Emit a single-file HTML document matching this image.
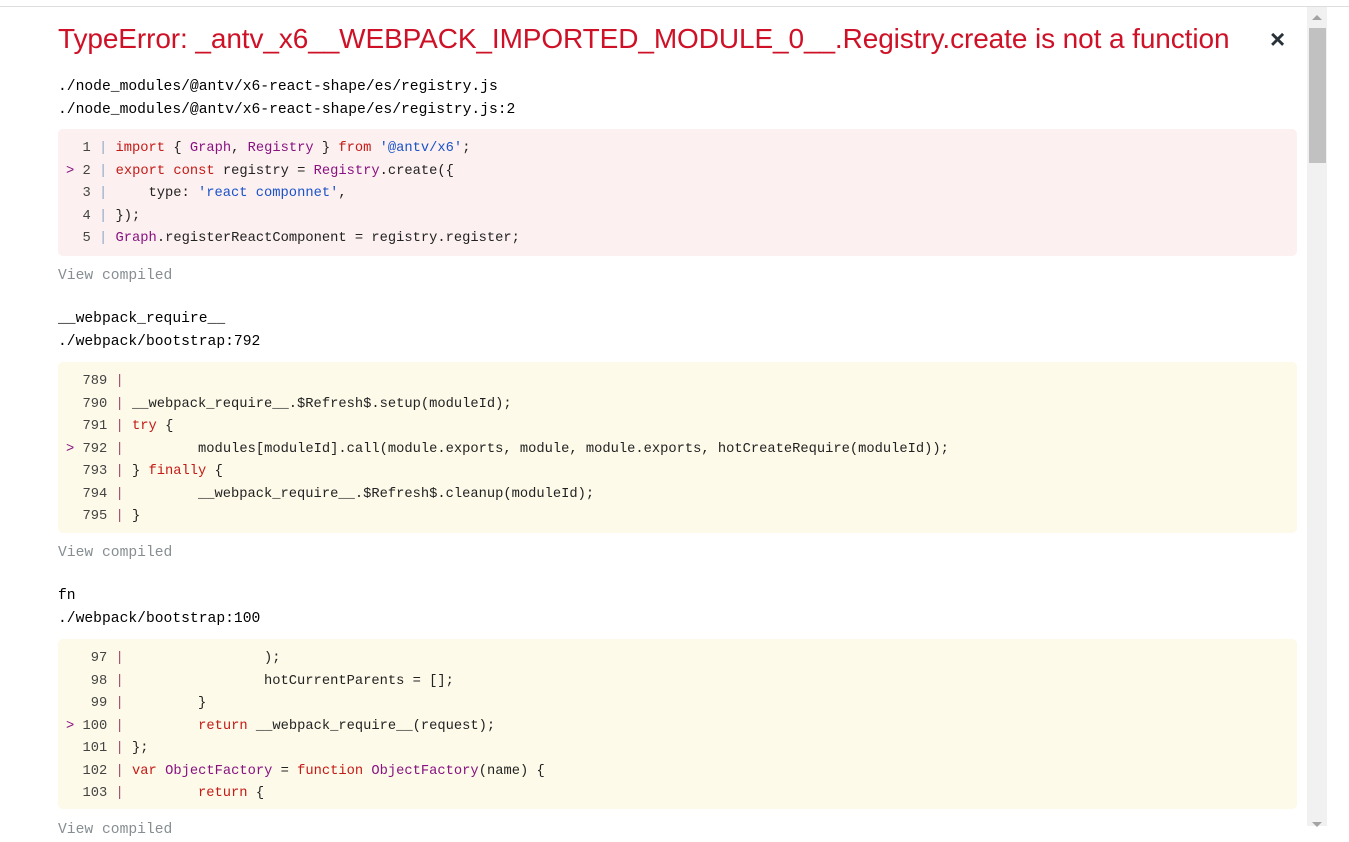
<!DOCTYPE html>
<html><head><meta charset="utf-8"><style>
html,body{margin:0;padding:0;background:#fff;width:1349px;height:826px;overflow:hidden;}
.top{position:absolute;left:0;top:6px;width:1349px;height:1px;background:#ddd;}
.sb{position:absolute;left:1307px;top:7px;width:20px;height:819px;background:#f1f1f1;}
.thumb{position:absolute;left:1309px;top:28px;width:17px;height:135px;background:#c1c1c1;}
.arr{position:absolute;left:1312px;top:15px;width:0;height:0;border-left:5px solid transparent;border-right:5px solid transparent;border-bottom:5px solid #a3a3a3;}
.arr2{position:absolute;left:1312px;top:822px;width:0;height:0;border-left:5px solid transparent;border-right:5px solid transparent;border-top:5px solid #a3a3a3;}
.title{position:absolute;left:58px;top:23px;font-family:"Liberation Sans",sans-serif;font-size:28px;color:#ce1126;white-space:nowrap;letter-spacing:-0.1px;}
.x{position:absolute;left:1270px;top:24px;font-family:"Liberation Sans",sans-serif;font-size:26px;color:#293238;font-weight:bold;}
.m{position:absolute;left:58px;font-family:"Liberation Mono",monospace;font-size:14.67px;color:#000;white-space:pre;line-height:22.5px;}
.vc{color:#878e91;}
.box{position:absolute;left:58px;width:1239px;border-radius:5px;}
.pink{background:#fcf0f0;}
.yel{background:#fdfae9;}
.code{position:absolute;left:66px;font-family:"Liberation Mono",monospace;font-size:13.75px;line-height:22.5px;white-space:pre;color:#222;}
.g{color:#444;}
.pp{color:#8fa8c8;}
.k{color:#c41a16;}
.p{color:#881280;}
.s{color:#1a52c9;}
.a{color:#881280;}
.py{color:#a24a6a;}
</style></head><body>
<div class="top"></div>
<div class="title">TypeError: _antv_x6__WEBPACK_IMPORTED_MODULE_0__.Registry.create is not a function</div>
<div class="x">×</div>
<div class="m" style="top:76px">./node_modules/@antv/x6-react-shape/es/registry.js
./node_modules/@antv/x6-react-shape/es/registry.js:2</div>
<div class="box pink" style="top:129px;height:127px"></div>
<div class="code" style="top:138px"><span class="g">  1 </span><span class="pp">|</span> <span class="k">import</span> { <span class="p">Graph</span>, <span class="p">Registry</span> } <span class="k">from</span> <span class="s">'@antv/x6'</span>;
<span class="a">&gt;</span><span class="g"> 2 </span><span class="pp">|</span> <span class="k">export</span> <span class="k">const</span> registry = <span class="p">Registry</span>.create({
<span class="g">  3 </span><span class="pp">|</span>     type: <span class="s">'react componnet'</span>,
<span class="g">  4 </span><span class="pp">|</span> });
<span class="g">  5 </span><span class="pp">|</span> <span class="p">Graph</span>.registerReactComponent = registry.register;</div>
<div class="m vc" style="top:265px">View compiled</div>
<div class="m" style="top:308px">__webpack_require__
./webpack/bootstrap:792</div>
<div class="box yel" style="top:362px;height:171px"></div>
<div class="code" style="top:371px"><span class="g">  789 </span><span class="py">|</span>
<span class="g">  790 </span><span class="py">|</span> __webpack_require__.$Refresh$.setup(moduleId);
<span class="g">  791 </span><span class="py">|</span> <span class="k">try</span> {
<span class="a">&gt;</span><span class="g"> 792 </span><span class="py">|</span>         modules[moduleId].call(module.exports, module, module.exports, hotCreateRequire(moduleId));
<span class="g">  793 </span><span class="py">|</span> } <span class="k">finally</span> {
<span class="g">  794 </span><span class="py">|</span>         __webpack_require__.$Refresh$.cleanup(moduleId);
<span class="g">  795 </span><span class="py">|</span> }</div>
<div class="m vc" style="top:542px">View compiled</div>
<div class="m" style="top:585px">fn
./webpack/bootstrap:100</div>
<div class="box yel" style="top:639px;height:170px"></div>
<div class="code" style="top:648px"><span class="g">   97 </span><span class="py">|</span>                 );
<span class="g">   98 </span><span class="py">|</span>                 hotCurrentParents = [];
<span class="g">   99 </span><span class="py">|</span>         }
<span class="a">&gt;</span><span class="g"> 100 </span><span class="py">|</span>         <span class="k">return</span> __webpack_require__(request);
<span class="g">  101 </span><span class="py">|</span> };
<span class="g">  102 </span><span class="py">|</span> <span class="k">var</span> <span class="p">ObjectFactory</span> = <span class="k">function</span> <span class="p">ObjectFactory</span>(name) {
<span class="g">  103 </span><span class="py">|</span>         <span class="k">return</span> {</div>
<div class="m vc" style="top:819px">View compiled</div>
<div class="sb"></div><div class="thumb"></div><div class="arr"></div><div class="arr2"></div>
</body></html>
